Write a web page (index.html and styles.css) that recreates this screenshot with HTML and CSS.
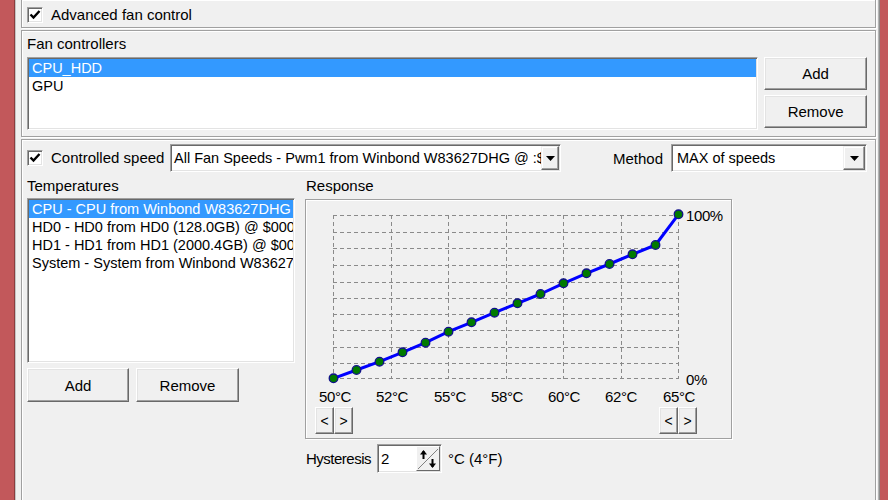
FILE: index.html
```html
<!DOCTYPE html>
<html>
<head>
<meta charset="utf-8">
<link rel="stylesheet" href="styles.css">
</head>
<body>
<div class="window">
  <div class="panel top-panel">
    <div class="check">
      <span class="cbox"><svg width="12" height="12" viewBox="0 0 12 12"><path d="M1.5 5.5 L4.5 8.5 L10.5 2" fill="none" stroke="#000" stroke-width="2.4"/></svg></span>
      <span>Advanced fan control</span>
    </div>
  </div>

  <div class="panel fan-panel">
    <div class="caption">Fan controllers</div>
    <div class="fan-row">
      <div class="listbox fan-list">
        <div class="item sel">CPU_HDD</div>
        <div class="item">GPU</div>
      </div>
      <div class="btn-col">
        <div class="btn">Add</div>
        <div class="btn">Remove</div>
      </div>
    </div>
  </div>

  <div class="panel lower-panel">
    <div class="speed-row">
      <div class="check speed-check">
        <span class="cbox"><svg width="12" height="12" viewBox="0 0 12 12"><path d="M1.5 5.5 L4.5 8.5 L10.5 2" fill="none" stroke="#000" stroke-width="2.4"/></svg></span>
        <span>Controlled speed</span>
      </div>
      <div class="combo combo-fan">
        <span class="combo-text">All Fan Speeds - Pwm1 from Winbond W83627DHG @ :$0290</span>
        <span class="drop"><svg width="9" height="5" viewBox="0 0 9 5"><path d="M0 0 H9 L4.5 5 Z" fill="#000"/></svg></span>
      </div>
      <div class="method-label">Method</div>
      <div class="combo combo-method">
        <span class="combo-text">MAX of speeds</span>
        <span class="drop"><svg width="9" height="5" viewBox="0 0 9 5"><path d="M0 0 H9 L4.5 5 Z" fill="#000"/></svg></span>
      </div>
    </div>

    <div class="cols">
      <div class="temps-col">
        <div class="caption">Temperatures</div>
        <div class="listbox temp-list">
          <div class="item sel">CPU - CPU from Winbond W83627DHG</div>
          <div class="item">HD0 - HD0 from HD0 (128.0GB) @ $0000000</div>
          <div class="item">HD1 - HD1 from HD1 (2000.4GB) @ $0000000</div>
          <div class="item">System - System from Winbond W83627DHG</div>
        </div>
        <div class="btn-row">
          <div class="btn b-add">Add</div>
          <div class="btn b-remove">Remove</div>
        </div>
      </div>

      <div class="resp-col">
        <div class="caption resp-caption">Response</div>
        <div class="chart">
          <svg class="chart-svg" width="425" height="206" viewBox="0 0 425 206">
            <g fill="none" stroke="#8a8a8a" stroke-width="1" stroke-dasharray="4 3">
              <path d="M27 15.5 H373 M27 32.5 H373 M27 48.5 H373 M27 65.5 H373 M27 82.5 H373 M27 98.5 H373 M27 114.5 H373 M27 130.5 H373 M27 147.5 H373 M27 163.5 H373 M27 178.5 H373"/>
              <path d="M27.5 15 V179 M85.5 15 V179 M142.5 15 V179 M200.5 15 V179 M257.5 15 V179 M315.5 15 V179 M372.5 15 V179"/>
            </g>
            <polyline fill="none" stroke="#0000ff" stroke-width="3" stroke-linejoin="round" points="27.5,178.3 50.5,170 73.5,161.7 96.5,152.3 119.5,142.7 142.5,131.7 165.5,122.3 188.5,112.7 211.5,103.3 234.5,94 257.5,83.3 280.5,73.3 303.5,64 326.5,54.3 349.5,45 372.5,14.3"/>
            <g fill="#007a00" stroke="#10108a" stroke-width="1.3">
              <circle cx="27.5" cy="178.3" r="4.3"/>
              <circle cx="50.5" cy="170" r="4.3"/>
              <circle cx="73.5" cy="161.7" r="4.3"/>
              <circle cx="96.5" cy="152.3" r="4.3"/>
              <circle cx="119.5" cy="142.7" r="4.3"/>
              <circle cx="142.5" cy="131.7" r="4.3"/>
              <circle cx="165.5" cy="122.3" r="4.3"/>
              <circle cx="188.5" cy="112.7" r="4.3"/>
              <circle cx="211.5" cy="103.3" r="4.3"/>
              <circle cx="234.5" cy="94" r="4.3"/>
              <circle cx="257.5" cy="83.3" r="4.3"/>
              <circle cx="280.5" cy="73.3" r="4.3"/>
              <circle cx="303.5" cy="64" r="4.3"/>
              <circle cx="326.5" cy="54.3" r="4.3"/>
              <circle cx="349.5" cy="45" r="4.3"/>
              <circle cx="372.5" cy="14.3" r="4.3"/>
            </g>
            <g class="chart-text" fill="#000">
              <text x="380" y="21">100%</text>
              <text x="380" y="185">0%</text>
              <g text-anchor="middle">
                <text x="29" y="202">50°C</text>
                <text x="86" y="202">52°C</text>
                <text x="144" y="202">55°C</text>
                <text x="201" y="202">58°C</text>
                <text x="258" y="202">60°C</text>
                <text x="315" y="202">62°C</text>
                <text x="373" y="202">65°C</text>
              </g>
            </g>
          </svg>
          <div class="scroll-row">
            <div class="pair"><span class="sbtn">&lt;</span><span class="sbtn">&gt;</span></div>
            <div class="pair"><span class="sbtn">&lt;</span><span class="sbtn">&gt;</span></div>
          </div>
        </div>
        <div class="hyst-row">
          <span class="hyst-label">Hysteresis</span>
          <div class="spin">
            <span class="spin-text">2</span>
            <span class="spin-btn"><svg width="22" height="22" viewBox="0 0 22 22">
              <path d="M1 21 L21 1" stroke="#808080" stroke-width="1"/>
              <path d="M6.5 3 V11" stroke="#000" stroke-width="2"/>
              <path d="M3 6.5 L6.5 2 L10 6.5 Z" fill="#000"/>
              <path d="M15.5 11 V19" stroke="#000" stroke-width="2"/>
              <path d="M12 15.5 L15.5 20 L19 15.5 Z" fill="#000"/>
            </svg></span>
          </div>
          <span class="unit">°C (4°F)</span>
        </div>
      </div>
    </div>
  </div>
</div>
</body>
</html>
```

FILE: styles.css
```css
* { box-sizing: border-box; }
html, body { margin: 0; padding: 0; }
body {
  width: 888px;
  height: 500px;
  overflow: hidden;
  background: #f0f0f0;
  font-family: "Liberation Sans", Arial, sans-serif;
  font-size: 15px;
  color: #000;
}
.window {
  width: 888px;
  height: 500px;
  overflow: hidden;
  border-left: 14px solid #c2585b;
  border-right: 8px solid #c2585b;
  box-shadow: inset 1px 0 0 #8a3d3f, inset 2px 0 0 #c4c4c4, inset -1px 0 0 #8c8c8c, inset -2px 0 0 #b4b4b4;
  padding: 0 4px 0 7px;
}
.panel {
  border: 1px solid #a0a0a0;
  box-shadow: inset 1px 1px 0 #fff, 1px 1px 0 #fff;
}
.top-panel {
  margin-top: -1px;
  height: 29px;
  padding: 7px 0 0 5px;
}
.check {
  display: flex;
  align-items: center;
  gap: 8px;
  height: 16px;
  line-height: 16px;
  white-space: nowrap;
}
.cbox {
  width: 16px;
  height: 16px;
  flex: none;
  background: #fff;
  border: 1px solid;
  border-color: #a0a0a0 #fff #fff #a0a0a0;
  box-shadow: inset 1px 1px 0 #696969, inset -1px -1px 0 #e3e3e3;
  display: flex;
  align-items: center;
  justify-content: center;
}
.cbox svg { display: block; }

.fan-panel {
  margin-top: 2px;
  height: 107px;
  padding: 4px 8px 0 5px;
}
.caption {
  height: 18px;
  line-height: 18px;
  white-space: nowrap;
}
.fan-row {
  margin-top: 4px;
  display: flex;
  gap: 6px;
}
.listbox {
  background: #fff;
  border: 1px solid;
  border-color: #a0a0a0 #fff #fff #a0a0a0;
  box-shadow: inset 1px 1px 0 #696969, inset -1px -1px 0 #e3e3e3;
  padding: 1px;
  overflow: hidden;
}
.item {
  height: 18px;
  line-height: 18px;
  padding-left: 3px;
  white-space: nowrap;
  overflow: hidden;
  font-size: 14.5px;
}
.item.sel {
  background: #3399ff;
  color: #fff;
}
.fan-list {
  width: 732px;
  height: 73px;
}
.btn-col {
  display: flex;
  flex-direction: column;
  gap: 5px;
  width: 103px;
}
.btn {
  height: 33px;
  background: #f0f0f0;
  border: 1px solid;
  border-color: #fff #696969 #696969 #fff;
  box-shadow: inset -1px -1px 0 #a0a0a0, inset 1px 1px 0 #e3e3e3;
  display: flex;
  align-items: center;
  justify-content: center;
  white-space: nowrap;
}

.lower-panel {
  margin-top: 2px;
  height: 380px;
  padding: 4px 8px 0 5px;
}
.speed-row {
  display: flex;
  align-items: center;
  height: 28px;
}
.speed-check {
  width: 143px;
  flex: none;
}
.combo {
  height: 28px;
  background: #fff;
  border: 1px solid;
  border-color: #a0a0a0 #fff #fff #a0a0a0;
  box-shadow: inset 1px 1px 0 #696969, inset -1px -1px 0 #e3e3e3;
  padding: 1px;
  display: flex;
  align-items: stretch;
  flex: none;
}
.combo-text {
  flex: 1;
  min-width: 0;
  overflow: hidden;
  white-space: nowrap;
  line-height: 24px;
  padding-left: 2px;
  font-size: 14.5px;
}
.drop {
  width: 18px;
  flex: none;
  background: #f0f0f0;
  border: 1px solid;
  border-color: #f0f0f0 #696969 #696969 #f0f0f0;
  box-shadow: inset -1px -1px 0 #a0a0a0, inset 1px 1px 0 #fff;
  display: flex;
  align-items: center;
  justify-content: center;
}
.drop svg { display: block; }
.combo-fan { width: 391px; }
.method-label {
  margin-left: auto;
  margin-right: 8px;
  white-space: nowrap;
}
.combo-method { width: 196px; }
.combo-method .combo-text { padding-left: 4px; }
.combo-method .drop { width: 22px; }

.cols {
  margin-top: 5px;
  display: flex;
  gap: 10px;
}
.temps-col { width: 268px; flex: none; }
.temp-list {
  margin-top: 3px;
  height: 165px;
}
.btn-row {
  margin-top: 5px;
  display: flex;
  gap: 7px;
}
.btn-row .btn { height: 34px; }
.b-add { width: 102px; }
.b-remove { width: 103px; }

.resp-col { width: 427px; flex: none; }
.resp-caption { padding-left: 1px; }
.chart {
  margin-top: 4px;
  height: 240px;
  border: 1px solid #a0a0a0;
  box-shadow: inset 1px 1px 0 #fff, 1px 1px 0 #fff;
  padding: 0 34px 4px 9px;
  display: flex;
  flex-direction: column;
}
.chart-svg {
  display: block;
  margin-left: -9px;
  margin-right: -34px;
  flex: none;
}
.chart-text {
  font-family: "Liberation Sans", Arial, sans-serif;
  font-size: 15px;
  letter-spacing: -0.4px;
}
.scroll-row {
  margin-top: 1px;
  display: flex;
  justify-content: space-between;
  height: 27px;
}
.pair { display: flex; }
.sbtn {
  width: 19px;
  height: 27px;
  background: #f0f0f0;
  border: 1px solid;
  border-color: #fff #696969 #696969 #fff;
  box-shadow: inset -1px -1px 0 #a0a0a0, inset 1px 1px 0 #e3e3e3;
  display: flex;
  align-items: center;
  justify-content: center;
  font-size: 14px;
}
.hyst-row {
  margin-top: 5px;
  display: flex;
  align-items: center;
  height: 29px;
}
.hyst-label {
  width: 72px;
  padding-left: 1px;
  white-space: nowrap;
  letter-spacing: -0.5px;
}
.spin {
  width: 65px;
  height: 29px;
  background: #fff;
  border: 1px solid;
  border-color: #a0a0a0 #fff #fff #a0a0a0;
  box-shadow: inset 1px 1px 0 #696969, inset -1px -1px 0 #e3e3e3;
  padding: 1px;
  display: flex;
}
.spin-text {
  flex: 1;
  line-height: 25px;
  padding-left: 2px;
}
.spin-btn {
  width: 24px;
  flex: none;
  background: #f0f0f0;
  border: 1px solid;
  border-color: #fff #696969 #696969 #fff;
  display: flex;
  align-items: center;
  justify-content: center;
}
.spin-btn svg { display: block; }
.unit {
  margin-left: 6px;
  white-space: nowrap;
}
```
